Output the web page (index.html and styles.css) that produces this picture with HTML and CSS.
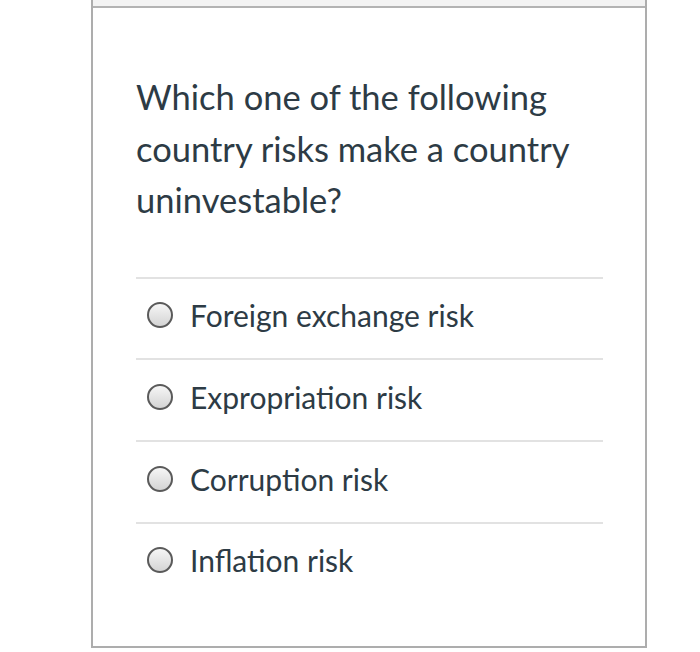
FILE: index.html
```html
<!DOCTYPE html>
<html>
<head>
<meta charset="utf-8">
<link rel="stylesheet" href="styles.css">
</head>
<body>
<div class="quiz">
  <div class="quiz-header"></div>
  <div class="quiz-body">
    <p class="question">Which one of the following country risks make a country uninvestable?</p>
    <ul class="answers">
      <li class="answer"><span class="radio"></span><span class="label">Foreign exchange risk</span></li>
      <li class="answer"><span class="radio"></span><span class="label">Expropriation risk</span></li>
      <li class="answer"><span class="radio"></span><span class="label">Corruption risk</span></li>
      <li class="answer"><span class="radio"></span><span class="label">Inflation risk</span></li>
    </ul>
  </div>
</div>
</body>
</html>
```
FILE: styles.css
```css
html, body {
  margin: 0;
  padding: 0;
  background: #ffffff;
}
body {
  font-family: Lato, "Open Sans", sans-serif;
  color: #2d3b45;
}
.quiz {
  margin-left: 91px;
  width: 552px;
  height: 646px;
  border: 2px solid #adadad;
  border-top: none;
  display: flex;
  flex-direction: column;
}
.quiz-header {
  height: 6px;
  background: #f3f3f3;
  border-bottom: 2px solid #b3b3b3;
}
.quiz-body {
  padding: 63px 42px 0 43px;
}
.question {
  margin: 0;
  font-size: 34.5px;
  line-height: 51.5px;
  width: 460px;
}
.answers {
  list-style: none;
  margin: 51px 0 0 0;
  padding: 0;
}
.answer {
  border-top: 2px solid #e2e2e2;
  height: 81.7px;
  display: flex;
  align-items: center;
  padding-left: 11px;
  padding-bottom: 6px;
  box-sizing: border-box;
  font-size: 30px;
}
.radio {
  width: 22px;
  height: 22px;
  border-radius: 50%;
  border: 2px solid #5a5a5a;
  background: linear-gradient(#f6f6f6, #d4d4d4);
  flex: none;
  margin-right: 17px;
}
.label {
  line-height: 1;
}
```
